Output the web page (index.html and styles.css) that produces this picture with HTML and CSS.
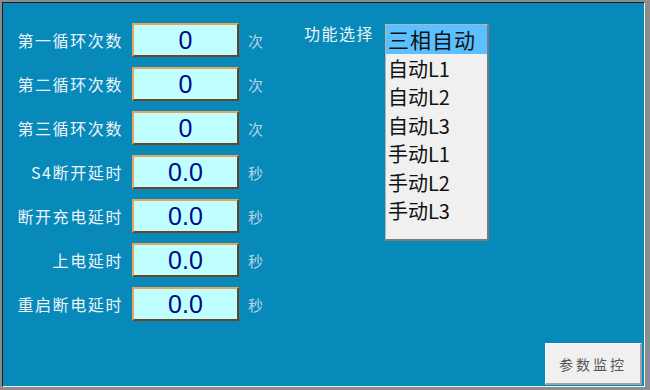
FILE: index.html
```html
<!DOCTYPE html>
<html lang="zh-CN">
<head>
<meta charset="utf-8">
<title>参数设置</title>
<link rel="stylesheet" href="styles.css">
</head>
<body>
<div class="frame">
  <div class="screen">
    <div class="params">
      <div class="row"><span class="label">第一循环次数</span><span class="field">0</span><span class="unit">次</span></div>
      <div class="row"><span class="label">第二循环次数</span><span class="field">0</span><span class="unit">次</span></div>
      <div class="row"><span class="label">第三循环次数</span><span class="field">0</span><span class="unit">次</span></div>
      <div class="row"><span class="label">S4断开延时</span><span class="field">0.0</span><span class="unit">秒</span></div>
      <div class="row"><span class="label">断开充电延时</span><span class="field">0.0</span><span class="unit">秒</span></div>
      <div class="row"><span class="label">上电延时</span><span class="field">0.0</span><span class="unit">秒</span></div>
      <div class="row"><span class="label">重启断电延时</span><span class="field">0.0</span><span class="unit">秒</span></div>
    </div>
    <div class="side">
      <div class="func">
        <span class="func-label">功能选择</span>
        <ul class="listbox">
          <li class="item selected">三相自动</li>
          <li class="item">自动L1</li>
          <li class="item">自动L2</li>
          <li class="item">自动L3</li>
          <li class="item">手动L1</li>
          <li class="item">手动L2</li>
          <li class="item">手动L3</li>
        </ul>
      </div>
      <button class="btn">参数监控</button>
    </div>
  </div>
</div>
</body>
</html>
```
FILE: styles.css
```css
html, body {
  margin: 0;
  padding: 0;
}
body {
  width: 650px;
  height: 390px;
  overflow: hidden;
  font-family: "Noto Sans CJK SC", "Liberation Sans", sans-serif;
}
.frame {
  box-sizing: border-box;
  width: 650px;
  height: 390px;
  border-style: solid;
  border-color: #8c8c8c;
  border-width: 2px 5px 3px 2px;
  background: #8c8c8c;
}
.screen {
  box-sizing: border-box;
  height: 100%;
  background: #0789ba;
  border-style: solid;
  border-width: 1px;
  border-color: #1a1a1a #f0f0f0 #f0f0f0 #1a1a1a;
  display: flex;
  padding: 20px 0 0 0;
}
.params {
  display: flex;
  flex-direction: column;
  gap: 10px;
  width: 280px;
}
.row {
  display: flex;
  align-items: center;
  height: 34px;
}
.label {
  width: 120px;
  text-align: right;
  color: #eef6fa;
  font-size: 16px;
  letter-spacing: 1.6px;
  white-space: nowrap;
  margin-right: 9px;
}
.field {
  box-sizing: border-box;
  width: 107px;
  height: 34px;
  background: #c0ffff;
  border-style: solid;
  border-width: 2px;
  border-color: #eda35a #6a4424 #6a4424 #eda35a;
  color: #000a8a;
  font-family: "Liberation Sans", Arial, sans-serif;
  font-size: 25px;
  line-height: 30px;
  text-align: center;
}
.unit {
  margin-left: 9px;
  color: #b9d6e4;
  font-size: 15px;
}
.side {
  flex: 1;
  display: flex;
  flex-direction: column;
  padding-right: 2px;
  padding-bottom: 1px;
}
.func {
  display: flex;
  align-items: flex-start;
  margin-left: 21px;
}
.func-label {
  color: #eef6fa;
  font-size: 16px;
  letter-spacing: 1.5px;
  line-height: 22px;
  margin-top: -1px;
  width: 81px;
}
.listbox {
  list-style: none;
  margin: 1px 0 0 0;
  padding: 0;
  box-sizing: border-box;
  width: 104px;
  height: 217px;
  background: #f0f0f0;
  border-style: solid;
  border-width: 1px 2px 2px 1px;
  border-color: #b4b4b4 #7a7a7a #7a7a7a #b4b4b4;
}
.item {
  height: 28.5px;
  line-height: 29px;
  font-size: 20px;
  color: #111;
  padding-left: 2px;
  white-space: nowrap;
}
.selected {
  background: #5bc0ff;
  font-size: 21px;
  letter-spacing: 1px;
}
.btn {
  margin-top: auto;
  align-self: flex-end;
  width: 97px;
  height: 42px;
  background: #f0f0f0;
  border-style: solid;
  border-width: 1px 2px 2px 1px;
  border-color: #ffffff #a0a0a0 #a0a0a0 #ffffff;
  color: #555;
  font-family: "Noto Sans CJK SC", sans-serif;
  font-size: 14px;
  letter-spacing: 3px;
  padding: 0;
}
```
